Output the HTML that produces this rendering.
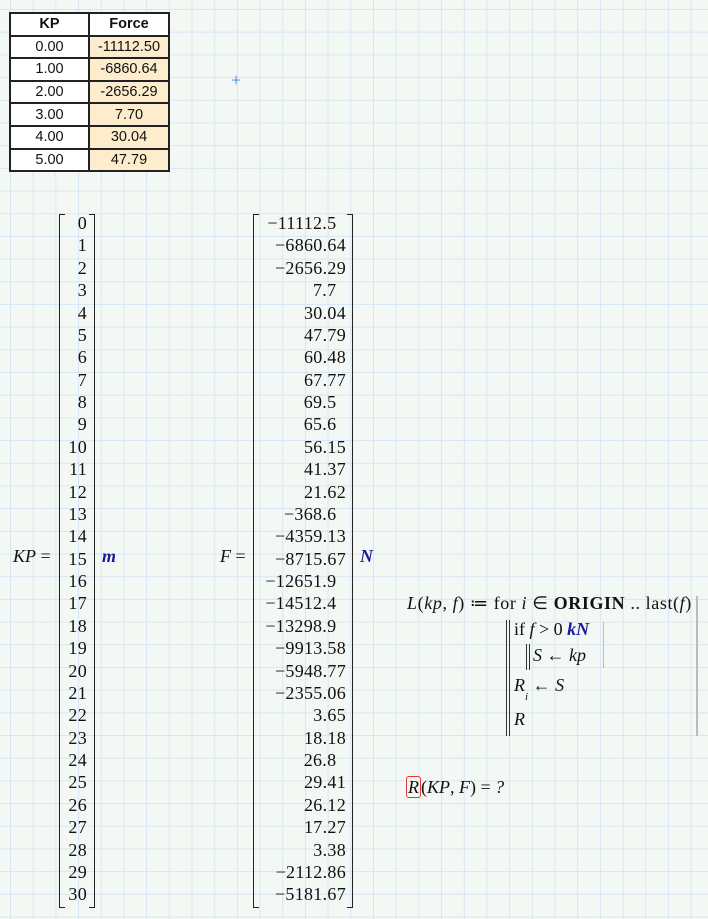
<!DOCTYPE html>
<html><head><meta charset="utf-8"><style>
html,body{margin:0;padding:0}
body{width:708px;height:919px;position:relative;overflow:hidden;background-color:#f4f8f5;
background-image:linear-gradient(to right,#d6e6f4 1px,transparent 1px),linear-gradient(to bottom,#d6e6f4 1px,transparent 1px);
background-size:22.7px 22.7px;background-position:10px 9px;font-family:"Liberation Serif",serif;color:#111}
table.t{position:absolute;left:9px;top:12px;border-collapse:collapse;font-family:"Liberation Sans",sans-serif;font-size:14.5px}
table.t td{border:2px solid #222;height:20.6px;padding:0;text-align:center;background:#fff}
table.t td.f{background:#fdedcc;width:78px}
table.t td.k{width:77px}
table.t tr:first-child td{font-weight:bold;background:#fff}
.col{position:absolute;font-size:18px;line-height:22.37px;text-align:right;letter-spacing:0.3px}
.br{position:absolute;border:1.5px solid #222}
.bl{border-right:none;width:5px}
.brr{border-left:none;width:5px}
.abs{position:absolute;font-size:18px;white-space:nowrap}
.u{color:#1a1a9c;font-weight:bold;font-style:italic}
i{font-style:italic}
</style></head><body>
<table class="t">
<tr><td class="k">KP</td><td class="f">Force</td></tr>
<tr><td class="k">0.00</td><td class="f">-11112.50</td></tr>
<tr><td class="k">1.00</td><td class="f">-6860.64</td></tr>
<tr><td class="k">2.00</td><td class="f">-2656.29</td></tr>
<tr><td class="k">3.00</td><td class="f">7.70</td></tr>
<tr><td class="k">4.00</td><td class="f">30.04</td></tr>
<tr><td class="k">5.00</td><td class="f">47.79</td></tr>
</table>
<div class="abs" style="left:231px;top:70px;color:#3d8ce0;font-size:18px">+</div>

<div class="br bl" style="left:59px;top:214px;height:692px"></div>
<div class="br brr" style="left:89px;top:214px;height:692px"></div>
<div class="col" style="left:55px;top:212px;width:32px">0<br>1<br>2<br>3<br>4<br>5<br>6<br>7<br>8<br>9<br>10<br>11<br>12<br>13<br>14<br>15<br>16<br>17<br>18<br>19<br>20<br>21<br>22<br>23<br>24<br>25<br>26<br>27<br>28<br>29<br>30</div>
<div class="abs" style="left:13px;top:546px"><i>KP</i> =</div>
<div class="abs u" style="left:102px;top:546px">m</div>

<div class="br bl" style="left:253px;top:214px;height:692px"></div>
<div class="br brr" style="left:347px;top:214px;height:692px"></div>
<div class="col" style="left:245px;top:212px;width:101px">−11112.5&nbsp;&nbsp;<br>−6860.64<br>−2656.29<br>7.7&nbsp;&nbsp;<br>30.04<br>47.79<br>60.48<br>67.77<br>69.5&nbsp;&nbsp;<br>65.6&nbsp;&nbsp;<br>56.15<br>41.37<br>21.62<br>−368.6&nbsp;&nbsp;<br>−4359.13<br>−8715.67<br>−12651.9&nbsp;&nbsp;<br>−14512.4&nbsp;&nbsp;<br>−13298.9&nbsp;&nbsp;<br>−9913.58<br>−5948.77<br>−2355.06<br>3.65<br>18.18<br>26.8&nbsp;&nbsp;<br>29.41<br>26.12<br>17.27<br>3.38<br>−2112.86<br>−5181.67</div>
<div class="abs" style="left:220px;top:546px"><i>F</i> =</div>
<div class="abs u" style="left:360px;top:546px">N</div>

<div class="abs" style="left:407px;top:593px;letter-spacing:0.6px"><i>L</i>(<i>kp</i>, <i>f</i>) ≔ for <i>i</i> ∈ <b>ORIGIN</b> .. last(<i>f</i>)</div>
<div style="position:absolute;left:696px;top:596px;width:2px;height:140px;background:#bbb"></div>
<div style="position:absolute;left:506px;top:620px;width:4px;height:116px;border-left:1.5px solid #333;border-right:1.5px solid #333;box-sizing:border-box"></div>
<div class="abs" style="left:514px;top:619px">if <i>f</i> &gt; 0 <span class="u">kN</span></div>
<div style="position:absolute;left:603px;top:622px;width:1px;height:46px;background:#bbb"></div>
<div style="position:absolute;left:526px;top:644px;width:4px;height:26px;border-left:1.5px solid #333;border-right:1.5px solid #333;box-sizing:border-box"></div>
<div class="abs" style="left:533px;top:645px"><i>S</i> ← <i>kp</i></div>
<div class="abs" style="left:514px;top:675px"><i>R</i><sub style="font-size:11px;position:relative;top:4px"><i>i</i></sub> ← <i>S</i></div>
<div class="abs" style="left:514px;top:709px"><i>R</i></div>
<div class="abs" style="left:406px;top:777px"><span style="border:1.5px solid #e33;border-radius:3px;padding:0 1px"><i>R</i></span>(<i>KP</i>, <i>F</i>) = <i>?</i></div>
</body></html>
